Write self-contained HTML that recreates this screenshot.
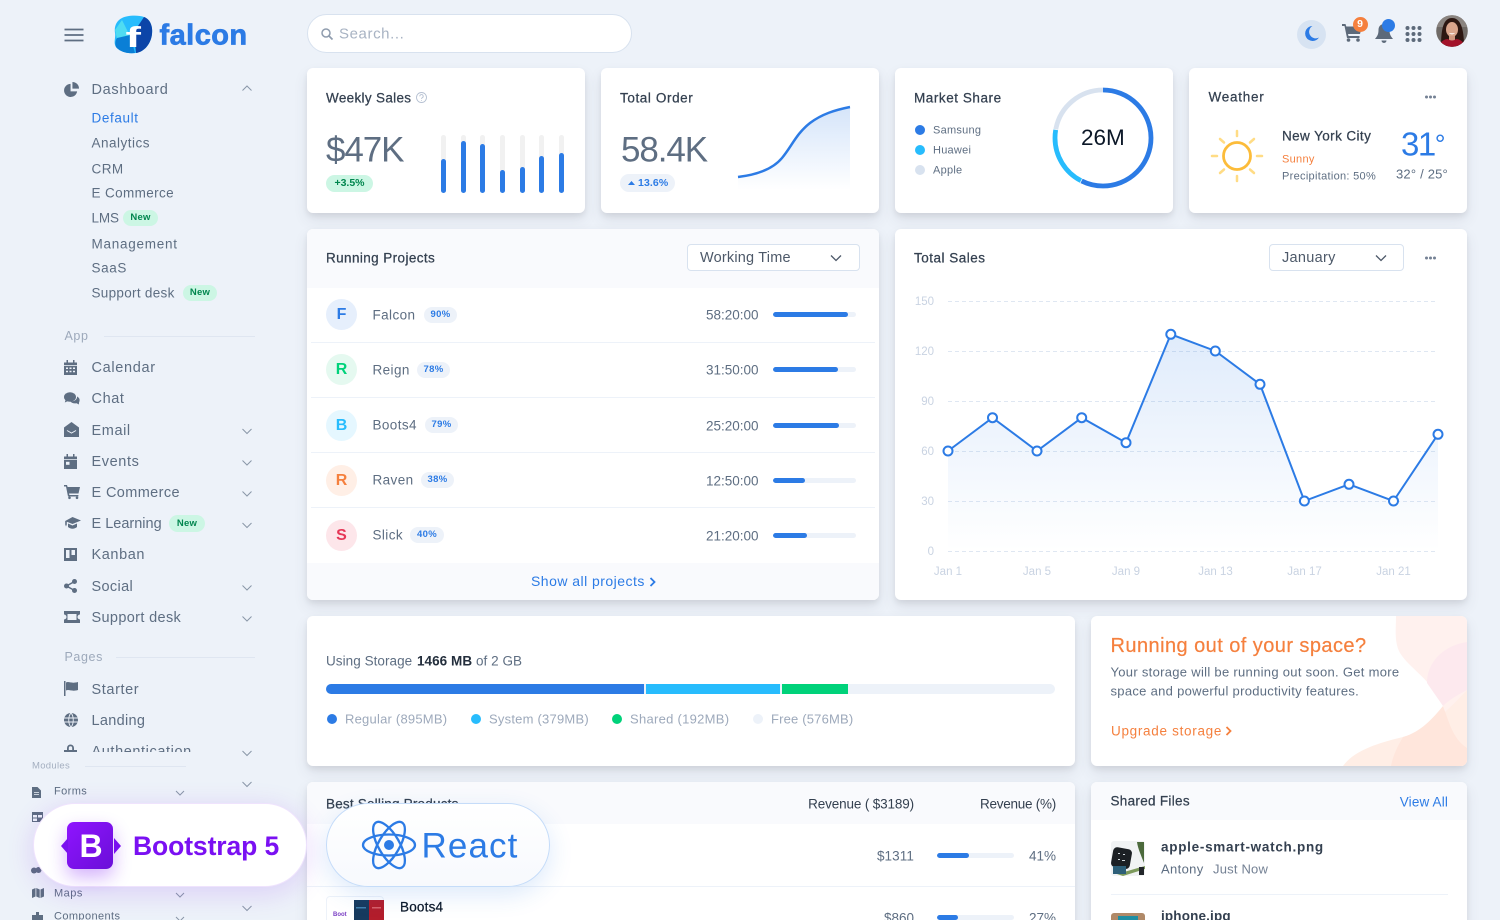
<!DOCTYPE html>
<html lang="en"><head><meta charset="utf-8"><title>Falcon Dashboard</title>
<style>
*{box-sizing:border-box}
html,body{margin:0;padding:0;width:1500px;height:920px;overflow:hidden}
body{background:#edf2f9;font-family:"Liberation Sans",sans-serif;color:#5e6e82}
#root{position:relative;width:1500px;height:920px;overflow:hidden}
.t{position:absolute;white-space:nowrap;line-height:1;transform:translateY(-50%)}
.a{position:absolute}
.card{position:absolute;background:#fff;border-radius:6px;box-shadow:0 7px 14px rgba(65,69,88,.1),0 3px 6px rgba(0,0,0,.07);overflow:hidden}
.nav{font-size:14.5px;letter-spacing:.6px;color:#5e6e82}
.sub{font-size:13.5px;letter-spacing:.5px;color:#5e6e82}
.sec{font-size:12.5px;letter-spacing:.6px;color:#9da9bb}
.ttl{font-size:13.5px;letter-spacing:.32px;color:#344050;-webkit-text-stroke:.25px #344050}
.big{font-size:35px;letter-spacing:-1.1px;color:#5e6e82}
.o{font-size:13px;letter-spacing:.3px;color:#5e6e82}
.new{position:absolute;background:#ccf6e4;color:#00864e;border-radius:10px;font-size:9.5px;font-weight:bold;text-align:center;letter-spacing:.2px}
.pb{position:absolute;background:#edf2f9;color:#2c7be5;border-radius:8px;height:16px;line-height:16px;font-size:9.5px;font-weight:bold;text-align:center;letter-spacing:.3px}
.av{position:absolute;left:326px;width:31px;height:31px;border-radius:50%;text-align:center;line-height:31px;font-size:16px;font-weight:bold}
.track{position:absolute;background:#edf2f9;border-radius:3px;height:5px;overflow:hidden}
.track i{display:block;height:100%;background:#2c7be5;border-radius:3px}
.bar{position:absolute;top:135px;width:5px;height:58px;background:#f1f1f1;border-radius:3px}
.bar i{position:absolute;left:0;right:0;bottom:0;background:#2c7be5;border-radius:3px}
.sel{position:absolute;background:#fff;border:1px solid #d8e2ef;border-radius:4px;height:27px;top:244px}
.dot{position:absolute;width:10px;height:10px;border-radius:50%}
.line{position:absolute;height:1px;background:#edf2f9}
svg{position:absolute;overflow:visible}
</style></head><body><div id="root">

<!-- SIDEBAR -->
<div class="a" style="left:0;top:0;width:300px;height:752px;overflow:hidden">
<svg style="left:64px;top:28px" width="20" height="14"><path d="M.5 1.500h19M.5 7h19M.5 12.500h19" stroke="#5e6e82" stroke-width="1.700"/></svg>
<svg style="left:64px;top:82px" width="15" height="15" viewBox="0 0 16 16"><path d="M7 2a7 7 0 1 0 7 8H7z" fill="#5e6e82"/><path d="M9 0a7 7 0 0 1 7 7H9z" fill="#5e6e82"/></svg>
<div class="t nav" style="left:91.500px;top:89.500px;letter-spacing:.68px">Dashboard</div>
<svg style="left:242px;top:85px" width="10" height="6"><path d="M.5 5.500 5 1l4.500 4.500" fill="none" stroke="#8a97a8" stroke-width="1"/></svg>
<div class="t sub" style="left:91.500px;top:118px;color:#2c7be5;letter-spacing:.62px">Default</div>
<div class="t sub" style="left:91.500px;top:143px">Analytics</div>
<div class="t sub" style="left:91.500px;top:168.500px;letter-spacing:.45px">CRM</div>
<div class="t sub" style="left:91.500px;top:193px;letter-spacing:.38px">E Commerce</div>
<div class="t sub" style="left:91.500px;top:218px;letter-spacing:-.1px">LMS</div>
<div class="new" style="left:123px;top:210px;width:35px;height:16px;line-height:16px">New</div>
<div class="t sub" style="left:91.500px;top:243.500px;letter-spacing:.75px">Management</div>
<div class="t sub" style="left:91.500px;top:268px;letter-spacing:.6px">SaaS</div>
<div class="t sub" style="left:91.500px;top:293px;letter-spacing:.3px">Support desk</div>
<div class="new" style="left:183px;top:285px;width:34px;height:16px;line-height:16px">New</div>

<div class="t sec" style="left:64.500px;top:336px">App</div>
<div class="line" style="left:104px;width:151px;top:335.500px;background:#dfe6f1"></div>

<svg style="left:64px;top:360px" width="13" height="15" viewBox="0 0 13 15"><path d="M0 2.500h13V5H0zM2.500 0h1.500v3H2.500zM9 0h1.500v3H9z" fill="#5e6e82"/><path d="M0 5.800h13V15H0z" fill="#5e6e82"/><path d="M2 7.500h2v1.500H2zM5.500 7.500h2v1.500h-2zM9 7.500h2v1.500H9zM2 10.800h2v1.500H2zM5.500 10.800h2v1.500h-2zM9 10.800h2v1.500H9z" fill="#edf2f9"/></svg>
<div class="t nav" style="left:91.500px;top:367.500px;letter-spacing:.68px">Calendar</div>
<svg style="left:64px;top:392px" width="16" height="14" viewBox="0 0 16 14"><ellipse cx="6" cy="5" rx="6" ry="4.800" fill="#5e6e82"/><path d="M1.500 8 .8 10.500 4 9z" fill="#5e6e82"/><path d="M13 4.500c2 1 3 2.500 2.500 4.500-.2 1-.7 1.500-.5 3.500l-2.500-1.300c-2.500.6-5-.3-6-1.700 3.800 0 7-2 6.500-5z" fill="#5e6e82"/></svg>
<div class="t nav" style="left:91.500px;top:399px">Chat</div>
<svg style="left:64px;top:422px" width="15" height="15" viewBox="0 0 15 15"><path d="M7.500 0 15 5.500V15H0V5.500z" fill="#5e6e82"/><path d="M3 8.500 7.500 11 12 8.500" fill="none" stroke="#edf2f9" stroke-width="1"/></svg>
<div class="t nav" style="left:91.500px;top:430.500px">Email</div>
<svg style="left:64px;top:454px" width="13" height="15" viewBox="0 0 13 15"><path d="M2.500 0H4v2.500h5V0h1.500v2.500H13V5H0V2.500h2.500zM0 5.800h13V15H0z" fill="#5e6e82"/><path d="M2 7.800h3.500v3H2z" fill="#edf2f9"/></svg>
<div class="t nav" style="left:91.500px;top:461.500px">Events</div>
<svg style="left:64px;top:485px" width="16" height="14" viewBox="0 0 16 14"><path d="M0 0h3l.6 2H16l-1.500 6.500H5l.4 1.500h9v1.500H4L2 1.500H0z" fill="#5e6e82"/><circle cx="5.500" cy="12.800" r="1.300" fill="#5e6e82"/><circle cx="13" cy="12.800" r="1.300" fill="#5e6e82"/></svg>
<div class="t nav" style="left:91.500px;top:492.500px;letter-spacing:.38px">E Commerce</div>
<svg style="left:64px;top:517px" width="17" height="13" viewBox="0 0 17 13"><path d="M8.500 0 17 3.500 8.500 7 2.800 4.700v2.800L2 9.500 1.200 7.500V4z" fill="#5e6e82"/><path d="M4 6.500 8.500 8.500 13 6.500V10c-2.500 2.300-6.500 2.300-9 0z" fill="#5e6e82"/></svg>
<div class="t nav" style="left:91.500px;top:524px;letter-spacing:0">E Learning</div>
<div class="new" style="left:169px;top:515px;width:36px;height:17px;line-height:17px">New</div>
<svg style="left:64px;top:548px" width="13" height="13" viewBox="0 0 13 13"><path fill-rule="evenodd" d="M0 0h13v13H0zM2 2v8h3.500V2zM7.500 2v5H11V2z" fill="#5e6e82"/></svg>
<div class="t nav" style="left:91.500px;top:554.500px">Kanban</div>
<svg style="left:64px;top:579px" width="13" height="14" viewBox="0 0 13 14"><circle cx="10.500" cy="2.500" r="2.500" fill="#5e6e82"/><circle cx="10.500" cy="11.500" r="2.500" fill="#5e6e82"/><circle cx="2.500" cy="7" r="2.500" fill="#5e6e82"/><path d="M10.500 2.500 2.500 7l8 4.500" fill="none" stroke="#5e6e82" stroke-width="1.500"/></svg>
<div class="t nav" style="left:91.500px;top:586.500px;letter-spacing:.35px">Social</div>
<svg style="left:64px;top:611px" width="16" height="12" viewBox="0 0 16 12"><path fill-rule="evenodd" d="M0 0h16v3.500a2.500 2.500 0 0 0 0 5V12H0V8.500a2.500 2.500 0 0 0 0-5zM3.500 3v6h9V3z" fill="#5e6e82"/></svg>
<div class="t nav" style="left:91.500px;top:617.500px;letter-spacing:.35px">Support desk</div>

<div class="t sec" style="left:64.500px;top:656.500px">Pages</div>
<div class="line" style="left:116px;width:139px;top:657px;background:#dfe6f1"></div>
<svg style="left:64px;top:681px" width="14" height="15" viewBox="0 0 14 15"><path d="M0 0h1.500v15H0z" fill="#5e6e82"/><path d="M2 1.500C5 0 7 3 14 1v8C8 11 5 8 2 9.500z" fill="#5e6e82"/></svg>
<div class="t nav" style="left:91.500px;top:689.500px">Starter</div>
<svg style="left:64px;top:713px" width="14" height="14" viewBox="0 0 14 14"><circle cx="7" cy="7" r="7" fill="#5e6e82"/><path d="M0 5h14M0 9h14M7 0c-3 3-3 11 0 14M7 0c3 3 3 11 0 14" fill="none" stroke="#edf2f9" stroke-width=".9"/></svg>
<div class="t nav" style="left:91.500px;top:720.500px;letter-spacing:.3px">Landing</div>
<svg style="left:64px;top:744px" width="13" height="15" viewBox="0 0 13 15"><path d="M3 6V4a3.500 3.500 0 0 1 7 0v2h-1.800V4a1.700 1.700 0 0 0-3.400 0v2z" fill="#5e6e82"/><path d="M0 6h13v9H0z" fill="#5e6e82"/></svg>
<div class="t nav" style="left:91.500px;top:751.500px">Authentication</div>
</div>
<svg width="300" height="920" style="left:0;top:0"><g fill="none" stroke="#8a97a8" stroke-width="1"><path d="M242.500 429 247 433.500l4.500-4.500M242.500 460.500 247 465l4.500-4.500M242.500 491.500 247 496l4.500-4.500M242.500 523 247 527.500l4.500-4.500M242.500 585.500 247 590l4.500-4.500M242.500 616.500 247 621l4.500-4.500M242.500 751 247 755.500l4.500-4.500M242.500 782 247 786.500l4.500-4.500M242.500 906 247 910.500l4.500-4.500M176 791 180 795l4-4M176 893 180 897l4-4M176 917 180 921l4-4"/></g></svg>

<!-- mini sidebar -->
<div class="t" style="left:32px;top:766px;font-size:9.500px;letter-spacing:.3px;color:#a4afc0">Modules</div>
<div class="line" style="left:85px;width:101px;top:766px;background:#dfe6f1"></div>
<svg style="left:32px;top:787px" width="9" height="11" viewBox="0 0 9 11"><path d="M0 0h5.500L9 3.500V11H0z" fill="#5e6e82"/><path d="M2 5.500h5M2 7.500h5" stroke="#edf2f9" stroke-width=".7"/></svg>
<div class="t" style="left:54px;top:792px;font-size:11px;letter-spacing:.4px">Forms</div>
<svg style="left:32px;top:812px" width="11" height="10" viewBox="0 0 11 10"><path fill-rule="evenodd" d="M0 0h11v10H0zM1 3v2.500h4V3zM6 3v2.500h4V3zM1 6.500V9h4V6.500z" fill="#5e6e82"/></svg>
<svg style="left:31px;top:866px" width="10" height="8"><circle cx="3" cy="4.500" r="3" fill="#5e6e82"/><circle cx="7.500" cy="4" r="3" fill="#5e6e82"/></svg>
<svg style="left:32px;top:888px" width="12" height="10" viewBox="0 0 12 10"><path d="M0 1.500 3.500 0v8.500L0 10zM4.300 0 7.700 1.500V10L4.300 8.500zM8.500 1.500 12 0v8.500L8.500 10z" fill="#5e6e82"/></svg>
<div class="t" style="left:54px;top:894px;font-size:11px;letter-spacing:.5px">Maps</div>
<svg style="left:32px;top:912px" width="11" height="11" viewBox="0 0 11 11"><path d="M0 3h4V0h3v3h4v8H0z" fill="#5e6e82"/></svg>
<div class="t" style="left:54px;top:917px;font-size:11px;letter-spacing:.4px">Components</div>

<!-- LOGO -->
<svg style="left:113px;top:16px" width="40" height="38" viewBox="0 0 40 38">
<path d="M9 2C15-1 26-1 31 1c6 2 9 9 8 17-1 10-8 18-16 19-7 1-16-1-20-6C0 27 3 21 2 17 1 11 3 5 9 2z" fill="#27bcfd"/>
<path d="M2 14 9 4l8 16-13 3z" fill="#4fdcf2"/>
<path d="M4 22 17 19l5 18c-7 1-15-1-19-6-1-3-1-6 1-9z" fill="#0a7fd6"/>
<path d="M31 1c6 2 9 9 8 17-1 10-8 18-16 19L21 16z" fill="#0c45a8"/>
<text transform="translate(12.500,31) scale(1.600,1)" font-family="Liberation Sans" font-weight="bold" font-size="29" fill="#fff">f</text>
</svg>
<div class="t" style="left:159.500px;top:36px;font-size:29px;font-weight:bold;color:#2c7be5;letter-spacing:.45px;-webkit-text-stroke:.7px #2c7be5">falcon</div>

<!-- TOP BAR -->
<div class="a" style="left:307px;top:14px;width:325px;height:39px;background:#fff;border:1px solid #d8e2ef;border-radius:20px"></div>
<svg style="left:321px;top:28px" width="12" height="12" viewBox="0 0 12 12"><circle cx="5" cy="5" r="4" fill="none" stroke="#8f9cae" stroke-width="1.500"/><path d="m8 8 3.500 3.500" stroke="#8f9cae" stroke-width="1.700"/></svg>
<div class="t" style="left:339px;top:33.500px;font-size:15px;letter-spacing:.6px;color:#a8b3c3">Search...</div>

<div class="a" style="left:1296.500px;top:19.500px;width:29px;height:29px;border-radius:50%;background:#d7e3f2"></div>
<svg style="left:1304px;top:26px" width="15" height="15" viewBox="0 0 15 15"><path d="M8.500 0a7.500 7.500 0 1 0 6.500 11.500A6.500 6.500 0 0 1 8.500 0z" fill="#2c7be5"/></svg>
<svg style="left:1342px;top:23px" width="20" height="19" viewBox="0 0 20 19"><path d="M0 1h3.500l.8 2.500H20L18 11H6l.5 2h11v2H5L2.500 3H0z" fill="#5d6a7a"/><circle cx="6.500" cy="17" r="1.800" fill="#5d6a7a"/><circle cx="16" cy="17" r="1.800" fill="#5d6a7a"/></svg>
<div class="a" style="left:1352.500px;top:16.500px;width:15px;height:15px;border-radius:50%;background:#f5803e;color:#fff;font-size:10.500px;font-weight:bold;text-align:center;line-height:15px">9</div>
<svg style="left:1375px;top:24px" width="18" height="20" viewBox="0 0 18 20"><path d="M9 0c3.500 0 5.500 2.500 5.500 6 0 4 1 6 3.500 9H0c2.500-3 3.500-5 3.500-9C3.500 2.500 5.500 0 9 0z" fill="#5d6a7a"/><path d="M6.500 16.500h5a2.500 2.500 0 0 1-5 0z" fill="#5d6a7a"/></svg>
<div class="a" style="left:1381.500px;top:18.500px;width:13px;height:13px;border-radius:50%;background:#2c7be5"></div>
<svg style="left:1405px;top:26px" width="17" height="16" fill="#5d6a7a"><circle cx="2.500" cy="2" r="2"/><circle cx="8.500" cy="2" r="2"/><circle cx="14.500" cy="2" r="2"/><circle cx="2.500" cy="8" r="2"/><circle cx="8.500" cy="8" r="2"/><circle cx="14.500" cy="8" r="2"/><circle cx="2.500" cy="14" r="2"/><circle cx="8.500" cy="14" r="2"/><circle cx="14.500" cy="14" r="2"/></svg>
<svg style="left:1436px;top:15px" width="32" height="32" viewBox="0 0 32 32"><defs><clipPath id="av"><circle cx="16" cy="16" r="15.800"/></clipPath></defs><g clip-path="url(#av)"><rect width="32" height="32" fill="#6f6a66"/><path d="M0 0h32v12H0z" fill="#8a8480"/><path d="M5 32C5 12 8 3 16 3s12 9 12 29z" fill="#2c1712"/><ellipse cx="16" cy="14.500" rx="6" ry="7.500" fill="#d9a58c"/><path d="M12.500 17.500c2 2.500 5 2.500 7 0-1 1-6 1-7 0z" fill="#fff"/><path d="M13 21h6v5h-6z" fill="#cf9880"/><path d="M3 32c1-6 6-8 9-8 2 2 6 2 8 0 3 0 8 2 9 8z" fill="#a3132a"/></g></svg>

<!-- ROW 1 -->
<div class="card" style="left:307px;top:67.500px;width:278px;height:145px"></div>
<div class="card" style="left:601px;top:67.500px;width:278px;height:145px"></div>
<div class="card" style="left:895px;top:67.500px;width:278px;height:145px"></div>
<div class="card" style="left:1189px;top:67.500px;width:278px;height:145px"></div>

<div class="t ttl" style="left:326px;top:98px">Weekly Sales</div>
<svg style="left:416px;top:92px" width="11" height="11" viewBox="0 0 11 11"><circle cx="5.500" cy="5.500" r="5" fill="none" stroke="#b6c1d2" stroke-width=".9"/><path d="M3.800 4.300a1.700 1.700 0 1 1 2.400 1.500c-.5.300-.7.600-.7 1.100M5.500 8v.8" fill="none" stroke="#b6c1d2" stroke-width=".9"/></svg>
<div class="t big" style="left:326px;top:150px">$47K</div>
<div class="a" style="left:326px;top:175px;width:47px;height:17px;border-radius:9px;background:#ccf6e4;color:#00864e;font-size:10.500px;font-weight:bold;line-height:17px;text-align:center">+3.5%</div>
<div class="bar" style="left:441px"><i style="top:24px"></i></div>
<div class="bar" style="left:461px"><i style="top:6px"></i></div>
<div class="bar" style="left:480px"><i style="top:9px"></i></div>
<div class="bar" style="left:500px"><i style="top:35px"></i></div>
<div class="bar" style="left:519.500px"><i style="top:32px"></i></div>
<div class="bar" style="left:539px"><i style="top:21px"></i></div>
<div class="bar" style="left:558.500px"><i style="top:18px"></i></div>

<div class="t ttl" style="left:620px;top:98px;letter-spacing:.6px">Total Order</div>
<div class="t big" style="left:621px;top:150px">58.4K</div>
<div class="a" style="left:620px;top:174px;width:55px;height:18px;border-radius:9px;background:#edf2f9;color:#2c7be5;font-size:10.500px;font-weight:bold;line-height:18px;padding-left:18px;letter-spacing:.1px">13.6%</div>
<svg style="left:628px;top:181px" width="7" height="4"><path d="M0 4 3.500 0 7 4z" fill="#2c7be5"/></svg>
<svg style="left:700px;top:90px" width="170" height="110" viewBox="700 90 170 110"><defs><linearGradient id="g1" x1="0" y1="0" x2="0" y2="1"><stop offset="0" stop-color="#2c7be5" stop-opacity=".2"/><stop offset="1" stop-color="#2c7be5" stop-opacity="0"/></linearGradient></defs><path d="M738 177C755 175 772 170 782 158 792 146 796 134 810 123 822 114 835 110 850 107V190H738z" fill="url(#g1)"/><path d="M738 177C755 175 772 170 782 158 792 146 796 134 810 123 822 114 835 110 850 107" fill="none" stroke="#2c7be5" stroke-width="2.500"/></svg>

<div class="t ttl" style="left:914px;top:98px;letter-spacing:.55px">Market Share</div>
<div class="dot" style="left:915px;top:125px;background:#2c7be5"></div>
<div class="dot" style="left:915px;top:145px;background:#27bcfd"></div>
<div class="dot" style="left:915px;top:165px;background:#d8e2ef"></div>
<div class="t" style="left:933px;top:130.500px;font-size:11px;letter-spacing:.25px">Samsung</div>
<div class="t" style="left:933px;top:150.500px;font-size:11px;letter-spacing:.25px">Huawei</div>
<div class="t" style="left:933px;top:170.500px;font-size:11px;letter-spacing:.25px">Apple</div>
<svg style="left:1050px;top:85px" width="106" height="106" viewBox="0 0 106 106"><g fill="none" stroke-width="4.800" transform="rotate(-90 53 53)"><circle cx="53" cy="53" r="48" stroke="#d8e2ef" stroke-dasharray="66.500 235.100" stroke-dashoffset="-234.600"/><circle cx="53" cy="53" r="48" stroke="#27bcfd" stroke-dasharray="60.500 241.100" stroke-dashoffset="-173.500"/><circle cx="53" cy="53" r="48" stroke="#2c7be5" stroke-dasharray="172.800 128.800"/></g></svg>
<div class="t" style="left:1081px;top:138px;font-size:22.500px;color:#0b1727">26M</div>

<div class="t ttl" style="left:1208.500px;top:96.500px;letter-spacing:.75px">Weather</div>
<svg style="left:1425px;top:95px" width="11" height="4" fill="#748194"><circle cx="1.500" cy="2" r="1.500"/><circle cx="5.500" cy="2" r="1.500"/><circle cx="9.500" cy="2" r="1.500"/></svg>
<svg style="left:1207px;top:126px" width="60" height="60" viewBox="0 0 60 60"><g stroke="#ffdc85" stroke-width="2.500" stroke-linecap="round"><path d="M30 5v5M30 50v5M5 30h5M50 30h5M13 13l4 3.500M47 13l-4 3.500M13 47l4-3.500M47 47l-4-3.500"/></g><circle cx="30" cy="30" r="13.500" fill="none" stroke="#fcbc3a" stroke-width="2.800"/></svg>
<div class="t ttl" style="left:1282px;top:136px;letter-spacing:.4px">New York City</div>
<div class="t" style="left:1282px;top:160px;font-size:11px;letter-spacing:.3px;color:#f5803e">Sunny</div>
<div class="t" style="left:1282px;top:176.500px;font-size:11px;letter-spacing:.3px">Precipitation: 50%</div>
<div class="t" style="left:1401px;top:144px;font-size:33px;letter-spacing:-1.500px;color:#2c7be5">31<span style="font-size:27px;vertical-align:2px">°</span></div>
<div class="t o" style="left:1396px;top:174px;font-size:13px;letter-spacing:.2px">32° / 25°</div>

<!-- RUNNING PROJECTS -->
<div class="card" style="left:307px;top:228.500px;width:572px;height:371.500px">
<div class="a" style="left:0;top:0;width:100%;height:59.500px;background:#f9fafd"></div>
<div class="a" style="left:0;bottom:0;width:100%;height:37px;background:#f9fafd"></div>
</div>
<div class="t ttl" style="left:326px;top:257.500px;letter-spacing:.4px">Running Projects</div>
<div class="sel" style="left:687px;width:173px"></div>
<div class="t" style="left:700px;top:257.500px;font-size:14.500px;letter-spacing:.2px;color:#4d5969">Working Time</div>
<svg style="left:830px;top:254px" width="12" height="8"><path d="M1 1.500 6 6.500l5-5" fill="none" stroke="#4d5969" stroke-width="1.300"/></svg>
<div class="line" style="left:311px;width:564px;top:342px"></div>
<div class="line" style="left:311px;width:564px;top:397px"></div>
<div class="line" style="left:311px;width:564px;top:452px"></div>
<div class="line" style="left:311px;width:564px;top:507px"></div>

<div class="av" style="top:299px;background:#e6effc;color:#2c7be5">F</div>
<div class="t o" style="left:372.500px;top:314.500px;font-size:13.500px;letter-spacing:.4px">Falcon</div>
<div class="pb" style="left:424px;top:306.500px;width:33px">90%</div>
<div class="t o" style="left:706px;top:315px;font-size:13.500px;letter-spacing:0">58:20:00</div>
<div class="track" style="left:773px;top:312px;width:83px"><i style="width:74.500px"></i></div>

<div class="av" style="top:354px;background:#e5f9f0;color:#00d27a">R</div>
<div class="t o" style="left:372.500px;top:369.500px;font-size:13.500px;letter-spacing:.4px">Reign</div>
<div class="pb" style="left:417px;top:361.500px;width:33px">78%</div>
<div class="t o" style="left:706px;top:370px;font-size:13.500px;letter-spacing:0">31:50:00</div>
<div class="track" style="left:773px;top:367px;width:83px"><i style="width:65px"></i></div>

<div class="av" style="top:410px;background:#e5f7ff;color:#27bcfd">B</div>
<div class="t o" style="left:372.500px;top:424.500px;font-size:13.500px;letter-spacing:.4px">Boots4</div>
<div class="pb" style="left:425px;top:416.500px;width:33px">79%</div>
<div class="t o" style="left:706px;top:425.500px;font-size:13.500px;letter-spacing:0">25:20:00</div>
<div class="track" style="left:773px;top:423px;width:83px"><i style="width:65.500px"></i></div>

<div class="av" style="top:465px;background:#ffefe6;color:#f5803e">R</div>
<div class="t o" style="left:372.500px;top:480px;font-size:13.500px;letter-spacing:.4px">Raven</div>
<div class="pb" style="left:421px;top:472px;width:33px">38%</div>
<div class="t o" style="left:706px;top:481px;font-size:13.500px;letter-spacing:0">12:50:00</div>
<div class="track" style="left:773px;top:478px;width:83px"><i style="width:31.500px"></i></div>

<div class="av" style="top:520px;background:#fde6ea;color:#e63757">S</div>
<div class="t o" style="left:372.500px;top:535px;font-size:13.500px;letter-spacing:.4px">Slick</div>
<div class="pb" style="left:410px;top:527px;width:34px">40%</div>
<div class="t o" style="left:706px;top:536px;font-size:13.500px;letter-spacing:0">21:20:00</div>
<div class="track" style="left:773px;top:533px;width:83px"><i style="width:33.500px"></i></div>

<div class="t" style="left:531px;top:581px;font-size:14px;letter-spacing:.47px;color:#2c7be5">Show all projects</div>
<svg style="left:649px;top:577px" width="7" height="10"><path d="M1.500 1 5.500 5l-4 4" fill="none" stroke="#2c7be5" stroke-width="1.800"/></svg>

<!-- TOTAL SALES -->
<div class="card" style="left:895px;top:228.500px;width:572px;height:371.500px"></div>
<div class="t ttl" style="left:914px;top:257.500px;letter-spacing:.5px">Total Sales</div>
<div class="sel" style="left:1269px;width:135px"></div>
<div class="t" style="left:1282px;top:257.500px;font-size:14.500px;letter-spacing:.3px;color:#4d5969">January</div>
<svg style="left:1375px;top:254px" width="12" height="8"><path d="M1 1.500 6 6.500l5-5" fill="none" stroke="#4d5969" stroke-width="1.300"/></svg>
<svg style="left:1425px;top:256px" width="11" height="4" fill="#748194"><circle cx="1.500" cy="2" r="1.500"/><circle cx="5.500" cy="2" r="1.500"/><circle cx="9.500" cy="2" r="1.500"/></svg>
<svg style="left:900px;top:290px" width="560" height="290" viewBox="900 290 560 290">
<defs><linearGradient id="g2" x1="0" y1="334" x2="0" y2="551" gradientUnits="userSpaceOnUse"><stop offset="0" stop-color="#2c7be5" stop-opacity=".15"/><stop offset="1" stop-color="#2c7be5" stop-opacity="0"/></linearGradient></defs>
<g stroke="#dfe7f2" stroke-width="1" stroke-dasharray="4 3"><path d="M948 301.500H1438M948 351.500H1438M948 401.500H1438M948 451.500H1438M948 501.500H1438M948 551.500H1438"/></g>
<path d="M948 451 992.500 417.700 1037 451 1081.700 417.700 1126 442.700 1170.800 334.300 1215.300 351 1260 384.300 1304.400 501 1349 484.300 1393.500 501 1438 434.300V551H948z" fill="url(#g2)"/>
<path d="M948 451 992.500 417.700 1037 451 1081.700 417.700 1126 442.700 1170.800 334.300 1215.300 351 1260 384.300 1304.400 501 1349 484.300 1393.500 501 1438 434.300" fill="none" stroke="#2c7be5" stroke-width="2"/>
<g fill="#fff" stroke="#2c7be5" stroke-width="2"><circle cx="948" cy="451" r="4.500"/><circle cx="992.500" cy="417.700" r="4.500"/><circle cx="1037" cy="451" r="4.500"/><circle cx="1081.700" cy="417.700" r="4.500"/><circle cx="1126" cy="442.700" r="4.500"/><circle cx="1170.800" cy="334.300" r="4.500"/><circle cx="1215.300" cy="351" r="4.500"/><circle cx="1260" cy="384.300" r="4.500"/><circle cx="1304.400" cy="501" r="4.500"/><circle cx="1349" cy="484.300" r="4.500"/><circle cx="1393.500" cy="501" r="4.500"/><circle cx="1438" cy="434.300" r="4.500"/></g>
<g font-family="Liberation Sans" font-size="11.500" fill="#c9d3e2" text-anchor="end"><text x="934" y="305">150</text><text x="934" y="355">120</text><text x="934" y="405">90</text><text x="934" y="455">60</text><text x="934" y="505">30</text><text x="934" y="555">0</text></g>
<g font-family="Liberation Sans" font-size="11.500" fill="#c9d3e2" text-anchor="middle"><text x="948" y="575">Jan 1</text><text x="1037" y="575">Jan 5</text><text x="1126" y="575">Jan 9</text><text x="1215.500" y="575">Jan 13</text><text x="1304.500" y="575">Jan 17</text><text x="1393.500" y="575">Jan 21</text></g>
</svg>

<!-- STORAGE -->
<div class="card" style="left:307px;top:616px;width:768px;height:150px"></div>
<div class="t o" style="left:326px;top:660.500px;font-size:13.500px;letter-spacing:.05px">Using Storage <b style="color:#232e3c;margin-left:1px">1466 MB</b> of 2 GB</div>
<div class="a" style="left:326px;top:684px;width:729px;height:10px;border-radius:5px;overflow:hidden;background:#edf2f9">
<div class="a" style="left:0;top:0;width:318px;height:10px;background:#2c7be5"></div>
<div class="a" style="left:320px;top:0;width:134px;height:10px;background:#27bcfd"></div>
<div class="a" style="left:456px;top:0;width:66px;height:10px;background:#00d27a"></div>
</div>
<div class="dot" style="left:326.500px;top:714px;background:#2c7be5"></div>
<div class="dot" style="left:471px;top:714px;background:#27bcfd"></div>
<div class="dot" style="left:612px;top:714px;background:#00d27a"></div>
<div class="dot" style="left:753px;top:714px;background:#edf2f9"></div>
<div class="t o" style="left:345px;top:719px;color:#9da9bb;letter-spacing:.22px">Regular (895MB)</div>
<div class="t o" style="left:489px;top:719px;color:#9da9bb;letter-spacing:.22px">System (379MB)</div>
<div class="t o" style="left:630px;top:719px;color:#9da9bb;letter-spacing:.28px">Shared (192MB)</div>
<div class="t o" style="left:771px;top:719px;color:#9da9bb;letter-spacing:.18px">Free (576MB)</div>

<!-- RUNNING OUT -->
<div class="card" style="left:1091px;top:616px;width:376px;height:150px">
<svg style="left:0;top:0" width="376" height="150" viewBox="0 0 376 150">
<path d="M305 0C305 14 303 26 309 37 318 52 342 65 352 90 358 105 361 122 376 132V0z" fill="#fff1ee"/>
<path d="M376 26C350 30 336 48 336 67L352 90C358 84 368 78 376 74z" fill="#fde9ee"/>
<path d="M252 150C262 136 282 128 312 121 332 116 352 100 376 74V150z" fill="#ffeee6"/>
<path d="M352 90C358 105 361 122 376 132V150H300C303 135 310 125 312 121 330 116 342 102 352 90z" fill="#ffe6dc"/>
</svg>
</div>
<div class="t" style="left:1110.500px;top:646px;font-size:20px;letter-spacing:.44px;color:#f5803e;-webkit-text-stroke:.2px #f5803e">Running out of your space?</div>
<div class="t o" style="left:1110.500px;top:671.500px;letter-spacing:.3px">Your storage will be running out soon. Get more</div>
<div class="t o" style="left:1110.500px;top:691px;letter-spacing:.3px">space and powerful productivity features.</div>
<div class="t" style="left:1111px;top:731px;font-size:13.500px;letter-spacing:.7px;color:#f5803e">Upgrade storage</div>
<svg style="left:1225px;top:726px" width="7" height="10"><path d="M1.500 1 5.500 5l-4 4" fill="none" stroke="#f5803e" stroke-width="1.800"/></svg>

<!-- BEST SELLING -->
<div class="card" style="left:307px;top:782px;width:768px;height:145px">
<div class="a" style="left:0;top:0;width:100%;height:42px;background:#f9fafd"></div>
</div>
<div class="t ttl" style="left:326px;top:803.500px;letter-spacing:.2px">Best Selling Products</div>
<div class="t" style="right:586px;top:803.500px;font-size:13.500px;letter-spacing:-.14px;color:#344050">Revenue ( $3189)</div>
<div class="t" style="right:444px;top:803.500px;font-size:13.500px;letter-spacing:-.25px;color:#344050">Revenue (%)</div>
<div class="line" style="left:307px;width:768px;top:886px"></div>
<div class="t o" style="right:586px;top:855.500px;font-size:13.500px;letter-spacing:.1px">$1311</div>
<div class="track" style="left:937px;top:853px;width:77px"><i style="width:32px"></i></div>
<div class="t o" style="right:444px;top:855.500px;font-size:13.500px;letter-spacing:0">41%</div>
<div class="a" style="left:326px;top:896px;width:58px;height:40px;border:1px solid #edf2f9;border-radius:4px"></div>
<svg style="left:354px;top:900px" width="30" height="20"><rect width="15" height="20" fill="#173a5e"/><rect x="15" width="15" height="20" fill="#b31d2b"/><rect x="2" y="7" width="10" height="1.500" fill="#3f7fae"/><rect x="18" y="7" width="9" height="1.500" fill="#d9606a"/></svg>
<div class="t" style="left:333px;top:915px;font-size:6px;font-weight:bold;color:#7b3fc4">Boot</div>
<div class="t" style="left:400px;top:906.500px;font-size:13.500px;letter-spacing:.2px;color:#0b1727;-webkit-text-stroke:.25px #0b1727">Boots4</div>
<div class="t o" style="right:586px;top:917.500px;font-size:13.500px;letter-spacing:0">$860</div>
<div class="track" style="left:937px;top:915px;width:77px"><i style="width:21px"></i></div>
<div class="t o" style="right:444px;top:917.500px;font-size:13.500px;letter-spacing:0">27%</div>

<!-- SHARED FILES -->
<div class="card" style="left:1091px;top:782px;width:376px;height:145px">
<div class="a" style="left:0;top:0;width:100%;height:38px;background:#f9fafd"></div>
</div>
<div class="t ttl" style="left:1110.500px;top:800.500px;letter-spacing:.3px">Shared Files</div>
<div class="t" style="right:52px;top:802px;font-size:13.500px;letter-spacing:.15px;color:#2c7be5">View All</div>
<svg style="left:1111px;top:841px" width="34" height="35" viewBox="0 0 34 35"><rect width="34" height="35" rx="3" fill="#f1f3f4"/><path d="M26 1 33 1 33 22C30 14 27 8 26 1z" fill="#4c6a3c"/><path d="M6 33 34 25V28L12 35z" fill="#7d9a5c"/><rect x="1" y="7" width="19" height="20" rx="4" fill="#1c2024" transform="rotate(10 10 17)"/><rect x="2" y="25" width="13" height="8" fill="#2d5f78"/><rect x="28" y="26" width="5" height="8" fill="#22262a"/><g fill="#cfd6da"><rect x="7" y="12" width="2" height="1"/><rect x="12" y="13" width="2" height="1"/><rect x="7" y="18" width="2" height="1"/><rect x="11" y="19" width="3" height="1"/></g></svg>
<div class="t" style="left:1161px;top:847px;font-size:13.500px;font-weight:bold;letter-spacing:.72px;color:#344050">apple-smart-watch.png</div>
<div class="t o" style="left:1161px;top:869px;font-size:13px;letter-spacing:.35px">Antony</div>
<div class="t o" style="left:1213px;top:869px;font-size:13px;letter-spacing:.2px;color:#748194">Just Now</div>
<div class="line" style="left:1111px;width:337px;top:894px"></div>
<svg style="left:1111px;top:913px" width="34" height="12"><rect width="34" height="12" rx="3" fill="#b08968"/><rect x="7" y="3" width="20" height="9" fill="#1f8ea3"/></svg>
<div class="t" style="left:1161px;top:915.500px;font-size:13.500px;font-weight:bold;letter-spacing:.15px;color:#344050">iphone.jpg</div>

<!-- FLOATING PILLS -->
<div class="a" style="left:33px;top:803px;width:274px;height:84px;border-radius:42px;background:#fff;border:1px solid #efe3fd;box-shadow:0 6px 28px rgba(122,16,245,.16)"></div>
<div class="a" style="left:67px;top:822px;width:46px;height:47px;border-radius:7px;background:linear-gradient(135deg,#8f14ff,#6a0fd8);box-shadow:0 8px 18px rgba(122,16,245,.32)"></div>
<svg style="left:60px;top:838px" width="62" height="16"><path d="M8 0 1 8l7 8zM54 0l7 8-7 8z" fill="#7a10ef"/></svg>
<div class="t" style="left:79.500px;top:846px;font-size:32px;font-weight:bold;color:#fff">B</div>
<div class="t" style="left:133px;top:846px;font-size:26.500px;font-weight:bold;color:#7a10f2;letter-spacing:-.1px">Bootstrap 5</div>

<div class="a" style="left:326px;top:803px;width:224px;height:84px;border-radius:42px;background:linear-gradient(#fff,#f7f9fd);border:1.500px solid #c5dcf9;box-shadow:0 8px 24px rgba(44,123,229,.16)"></div>
<svg style="left:361px;top:820px" width="56" height="50" viewBox="-28 -25 56 50"><circle r="5" fill="#2c7be5"/><g fill="none" stroke="#2c7be5" stroke-width="2.300"><ellipse rx="26" ry="10.500"/><ellipse rx="26" ry="10.500" transform="rotate(60)"/><ellipse rx="26" ry="10.500" transform="rotate(120)"/></g></svg>
<div class="t" style="left:421.500px;top:845.500px;font-size:35px;letter-spacing:1.100px;color:#2c7be5">React</div>

</div></body></html>
